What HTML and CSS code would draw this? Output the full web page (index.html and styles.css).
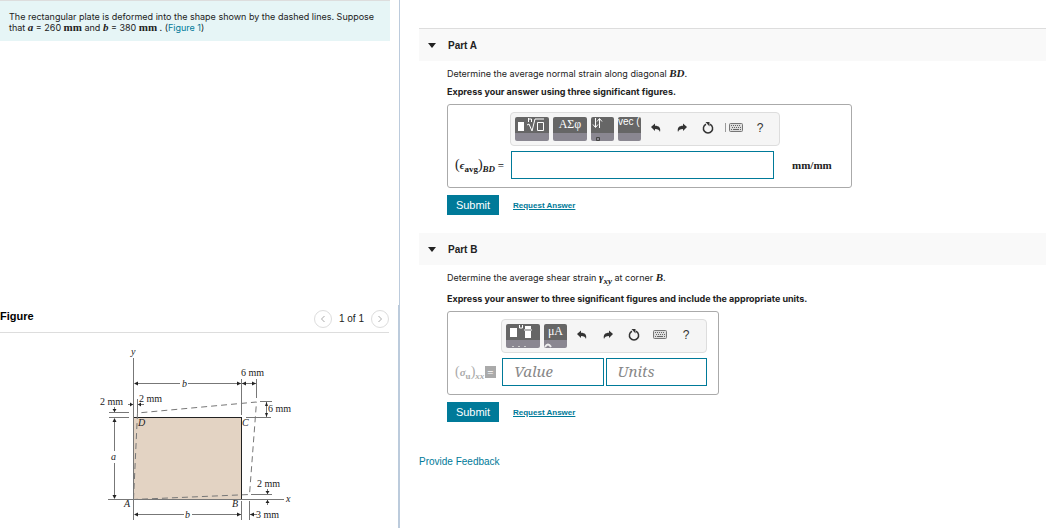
FILE: index.html
```
<!doctype html>
<html lang="en">
<head>
	<meta charset="UTF-8">
	<title>Average normal strain</title>
	<link rel="stylesheet" href="styles.css">
</head>
<body>
<svg class="defs" width="0" height="0" aria-hidden="true">
	<symbol id="undo" viewBox="0 0 12 12"><path d="M1 5l4-3.500v2.200c4 0 6 2 5 6.300-.6-2-2-3-5-3v2z" fill="#333"/></symbol>
	<symbol id="redo" viewBox="0 0 12 12"><path d="M11 5L7 1.500v2.200c-4 0-6 2-5 6.300.6-2 2-3 5-3v2z" fill="#333"/></symbol>
	<symbol id="reset" viewBox="0 0 12 12"><path d="M8 2.200A4.600 4.600 0 1 1 4 2.200" fill="none" stroke="#333" stroke-width="1.500"/><path d="M3.500 0h4v4.500z" fill="#333"/></symbol>
	<symbol id="keyboard" viewBox="0 0 14 9"><rect x=".5" y=".5" width="13" height="8" rx="1" fill="#ddd" stroke="#777"/><path d="M2 2.500h10M3 4.500h9" stroke="#666" stroke-dasharray="1 1"/><path d="M2 6.500h1M4 6.500h6M11 6.500h1" stroke="#666"/></symbol>
</svg>
<div class="page">
	<aside class="side">
		<div class="prompt">The rectangular plate is deformed into the shape shown by the dashed lines. Suppose that <i class="math">a</i> = 260 <span class="math">mm</span> and <i class="math">b</i> = 380 <span class="math">mm</span> . (<a href="#figure">Figure 1</a>)</div>
		<section class="figure" id="figure">
			<div class="figure-head">
				<h2>Figure</h2>
				<div class="pager">
					<button type="button" aria-label="Previous"><svg width="8" height="8" viewBox="0 0 8 8"><path d="M5.500 1L2.500 4l3 3"/></svg></button>
					<span>1 of 1</span>
					<button type="button" aria-label="Next"><svg width="8" height="8" viewBox="0 0 8 8"><path d="M2.500 1l3 3-3 3"/></svg></button>
				</div>
			</div>
			<svg class="plate" width="200" height="188" viewBox="100 340 200 188" role="img" aria-label="Deformed rectangular plate">
				<rect x="133.500" y="417.500" width="108" height="82" fill="#e3d3c3" stroke="#222"/>
				<g class="line">
					<path d="M133.500 358v162M108 499.500h176"/>
					<path d="M137.500 399v14M241.500 379v36M256.500 379v19M241.500 501v19M249.500 501v19"/>
					<path d="M109 412.500h20M109 417.500h20M246 417.500h25M260 401.500h12M251 494.500h21"/>
					<path d="M135 383.500h45M188 383.500h68M135 514.500h49M192 514.500h49M114.500 419v32M114.500 463v35M266.500 402v15M114.500 407v5M128 404.500h5M138 404.500h6M267.500 489v5M267.500 500v5M250 514.500h7"/>
				</g>
				<path class="dash" d="M133.500 499L137.500 413L256.500 402L249.500 494.500L133.500 499.500"/>
				<path d="M134 383.500l4-2v4zM241 383.500l-4-2v4zM242 383.500l4-2v4zM256 383.500l-4-2v4zM134 514.500l4-2v4zM241 514.500l-4-2v4zM250 514.500l4-2v4zM114.500 418l-2 4h4zM114.500 499l-2-4h4zM114.500 412l-2-3h4zM266.500 402l-1.500 4h3zM266.500 417l-1.500-4h3zM133 404.500l-3-2v4zM138 404.500l3-2v4zM267.500 494l-2-3h4zM267.500 500l-2 3h4z" fill="#222"/>
				<g class="letters">
					<text x="131" y="355">y</text>
					<text x="182" y="387">b</text>
					<text x="111" y="460">a</text>
					<text x="138" y="426">D</text>
					<text x="242" y="426">C</text>
					<text x="124" y="507">A</text>
					<text x="232" y="507">B</text>
					<text x="286" y="502">x</text>
					<text x="185" y="518">b</text>
				</g>
				<g class="sizes">
					<text x="241" y="376">6 mm</text>
					<text x="100" y="405">2 mm</text>
					<text x="139" y="402">2 mm</text>
					<text x="268" y="412">6 mm</text>
					<text x="257" y="487">2 mm</text>
					<text x="256" y="518">3 mm</text>
				</g>
			</svg>
		</section>
	</aside>

	<main class="main">
		<section class="part">
			<h2 class="part-head first"><span class="arrow"></span>Part A</h2>
			<div class="part-body">
				<p>Determine the average normal strain along diagonal <i class="math">BD</i>.</p>
				<p class="hint">Express your answer using three significant figures.</p>
				<div class="answer wide">
					<div class="toolbar">
						<button type="button" class="tool large" aria-label="Templates"><svg width="34" height="24" viewBox="0 0 34 24"><path d="M3 5h6v9H3z" fill="#fff"/><path d="M12 8l2-1 3 7 3-12h9M22.500 5.500h6v8h-6zM13.500 1v4M16.500 5V2h-3" fill="none" stroke="#fff"/></svg></button>
						<button type="button" class="tool large">ΑΣφ</button>
						<button type="button" class="tool" aria-label="Arrows"><svg width="23" height="24" viewBox="0 0 23 24"><path d="M4.500 1v9M2 7.500l2.500 3 2.500-3M8.500 11V2M6 4.500l2.500-3 2.500 3" fill="none" stroke="#fff"/><path d="M5.500 20.500h3v3h-3z" fill="none" stroke="#444"/></svg></button>
						<button type="button" class="tool vec">vec (</button>
						<button type="button" class="icon" aria-label="Undo"><svg width="12" height="12"><use href="#undo"/></svg></button>
						<button type="button" class="icon" aria-label="Redo"><svg width="12" height="12"><use href="#redo"/></svg></button>
						<button type="button" class="icon" aria-label="Reset"><svg width="12" height="12"><use href="#reset"/></svg></button>
						<button type="button" class="icon keys" aria-label="Keyboard"><svg width="14" height="9"><use href="#keyboard"/></svg></button>
						<button type="button" class="icon">?</button>
					</div>
					<label class="symbol" for="strain"><span class="paren">(</span><i>ϵ</i><sub>avg</sub><span class="paren">)</span><sub><i>BD</i></sub> =</label>
					<input type="text" id="strain">
					<span class="unit math">mm/mm</span>
				</div>
				<div class="actions">
					<button type="submit" class="submit">Submit</button>
					<a href="#">Request Answer</a>
				</div>
			</div>
		</section>

		<section class="part">
			<h2 class="part-head"><span class="arrow"></span>Part B</h2>
			<div class="part-body">
				<p>Determine the average shear strain <i class="math">γ<sub>xy</sub></i> at corner <i class="math">B</i>.</p>
				<p class="hint loose">Express your answer to three significant figures and include the appropriate units.</p>
				<div class="answer narrow">
					<div class="toolbar">
						<button type="button" class="tool large" aria-label="Templates"><svg width="34" height="24" viewBox="0 0 34 24"><path d="M4 4h7v9H4zM19 2h6v3h-6zM19 7h6v7h-6z" fill="#fff"/><path d="M13.500 1v3h3V1M18 6h8" fill="none" stroke="#fff"/><path d="M6 22.500h16" stroke="#ccc" stroke-dasharray="2 4"/></svg></button>
						<button type="button" class="tool units" aria-label="Units">μA<svg width="8" height="5" viewBox="0 0 8 5"><path d="M1 4q3-5 6 0" fill="none" stroke="#eee" stroke-width="2"/></svg></button>
						<button type="button" class="icon" aria-label="Undo"><svg width="12" height="12"><use href="#undo"/></svg></button>
						<button type="button" class="icon" aria-label="Redo"><svg width="12" height="12"><use href="#redo"/></svg></button>
						<button type="button" class="icon" aria-label="Reset"><svg width="12" height="12"><use href="#reset"/></svg></button>
						<button type="button" class="icon" aria-label="Keyboard"><svg width="14" height="9"><use href="#keyboard"/></svg></button>
						<button type="button" class="icon">?</button>
					</div>
					<label class="symbol faded" for="value"><span class="paren">(</span><i>σ</i><sub>u</sub><span class="paren">)</span><sub><i>xx</i></sub><b>=</b></label>
					<div class="pair">
						<input type="text" id="value" placeholder="Value">
						<input type="text" placeholder="Units" aria-label="Units">
					</div>
				</div>
				<div class="actions">
					<button type="submit" class="submit">Submit</button>
					<a href="#">Request Answer</a>
				</div>
			</div>
		</section>
		<a class="feedback" href="#">Provide Feedback</a>
	</main>
</div>
</body>
</html>
```
FILE: styles.css
```
* {
	box-sizing: border-box;
	margin: 0;
	padding: 0;
}
body {
	background: #fff;
	color: #222;
	font: 9px/11px "Liberation Sans", Arial, sans-serif;
	overflow: hidden;
}
a {
	color: #007a99;
	text-decoration: none;
}
button {
	border: 0;
	font-family: inherit;
}
svg {
	display: block;
}
.defs {
	position: absolute;
}
.page {
	display: flex;
	min-height: 100vh;
}

/* left column */
.side {
	display: flex;
	flex-direction: column;
	justify-content: space-between;
	width: 400px;
	flex: none;
	border-right: 1px solid #bccbdc;
}
.prompt {
	margin-right: 9px;
	padding: 10px 9px 8px;
	border-top: 1px solid #ddd;
	background: #e6f5f6;
	font-family: Inter, "Liberation Sans", sans-serif;
}
.math {
	font: bold 11px/11px "Liberation Serif", serif;
}
i.math {
	font-style: italic;
}
.figure {
	border-right: 1px solid #bccbdc;
	height: 223px;
}
.figure-head {
	display: flex;
	justify-content: space-between;
	height: 28px;
	margin-right: 9px;
	border-bottom: 1px solid #ddd;
}
.figure-head h2 {
	color: #000;
	font-size: 11px;
	line-height: 22px;
}
.pager {
	display: flex;
	align-items: center;
	gap: 7px;
	height: 27px;
	font-size: 10px;
}
.pager button {
	display: flex;
	align-items: center;
	justify-content: center;
	width: 18px;
	height: 18px;
	border: 1px solid #ddd;
	border-radius: 50%;
	background: #fff;
}
.pager path {
	fill: none;
	stroke: #aaa;
}
.plate {
	margin: 7px 0 0 100px;
	overflow: visible;
}
.line {
	fill: none;
	stroke: #777;
}
.dash {
	fill: none;
	stroke: #777;
	stroke-dasharray: 6 4;
}
.letters, .sizes {
	fill: #222;
	font: italic 10px "Liberation Serif", serif;
}
.sizes {
	font-style: normal;
}

/* right column */
.main {
	flex: 1;
	padding: 28px 0 0 19px;
}
.part-head {
	display: flex;
	align-items: center;
	height: 32px;
	padding-left: 9px;
	background: #f9f9f9;
	font-size: 10px;
}
.part-head.first {
	height: 33px;
	border-top: 1px solid #ddd;
}
.arrow {
	margin-right: 12px;
	border: 4px solid transparent;
	border-top: 5px solid #222;
	border-bottom: 0;
}
.part-body {
	padding: 7px 0 18px 28px;
}
.part-body p {
	font-family: Inter, "Liberation Sans", sans-serif;
	line-height: 12px;
}
.part-body .hint {
	margin: 6px 0;
	font-weight: bold;
}
.part-body .loose {
	margin-top: 9px;
}
.answer {
	display: grid;
	align-items: center;
	row-gap: 5px;
	height: 84px;
	padding: 7px 0 8px 7px;
	border: 1px solid #aaa;
	border-radius: 3px;
}
.wide {
	grid-template-columns: 56px 263px 1fr;
	max-width: 405px;
}
.narrow {
	grid-template-columns: 47px 205px;
	max-width: 272px;
}
.toolbar {
	display: flex;
	align-items: center;
	grid-column: 2 / -1;
	gap: 4px;
	height: 34px;
	margin-left: -1px;
	padding: 0 4px;
	border: 1px solid #ddd;
	border-radius: 4px;
	background: #f5f5f5;
}
.wide .toolbar {
	width: 270px;
}
.tool {
	width: 23px;
	height: 24px;
	overflow: hidden;
	border-radius: 2px;
	background: linear-gradient(#666 65%, #8a8791 65%);
	color: #fff;
	font: 12px/14px "Liberation Serif", serif;
	display: flex;
	flex-direction: column;
	justify-content: space-between;
	align-items: center;
}
.large {
	width: 34px;
}
.vec {
	align-items: flex-start;
	font: 10px/9px "Liberation Sans", sans-serif;
	white-space: nowrap;
}
.units svg {
	align-self: flex-start;
}
.icon {
	display: flex;
	flex: none;
	align-items: center;
	justify-content: center;
	width: 22px;
	height: 24px;
	padding-bottom: 3px;
	background: none;
	color: #333;
	font-size: 12px;
}
.keys svg {
	box-sizing: content-box;
	padding-left: 3px;
	border-left: 1px solid #999;
}
.symbol {
	font: 11px/16px "Liberation Serif", serif;
	font-weight: bold;
	white-space: nowrap;
}
sub {
	font-size: 9px;
	line-height: 1px;
	vertical-align: -3px;
}
.paren {
	font-size: 14px;
	font-weight: normal;
}
.faded {
	color: #aaa;
}
.faded b {
	margin-left: 1px;
	padding: 0 2px;
	background: #aaa;
	color: #fff;
	line-height: 10px;
}
input {
	width: 100%;
	min-width: 0;
	height: 28px;
	padding: 0 11px;
	border: 1px solid #007a99;
	background: #fff;
	font: 16px "Liberation Serif", serif;
}
input::placeholder {
	color: #888;
	font: italic 15px "Noto Serif", "DejaVu Serif", serif;
}
.unit {
	margin-left: 18px;
}
.pair {
	display: flex;
	gap: 2px;
}
.actions {
	display: flex;
	align-items: center;
	gap: 14px;
	margin-top: 7px;
}
.submit {
	width: 52px;
	height: 20px;
	background: #007a99;
	color: #fff;
	font-size: 11px;
}
.actions a {
	font-size: 8px;
	font-weight: bold;
	text-decoration: underline;
}
.feedback {
	display: inline-block;
	margin-top: 16px;
	font-size: 10px;
}
```
